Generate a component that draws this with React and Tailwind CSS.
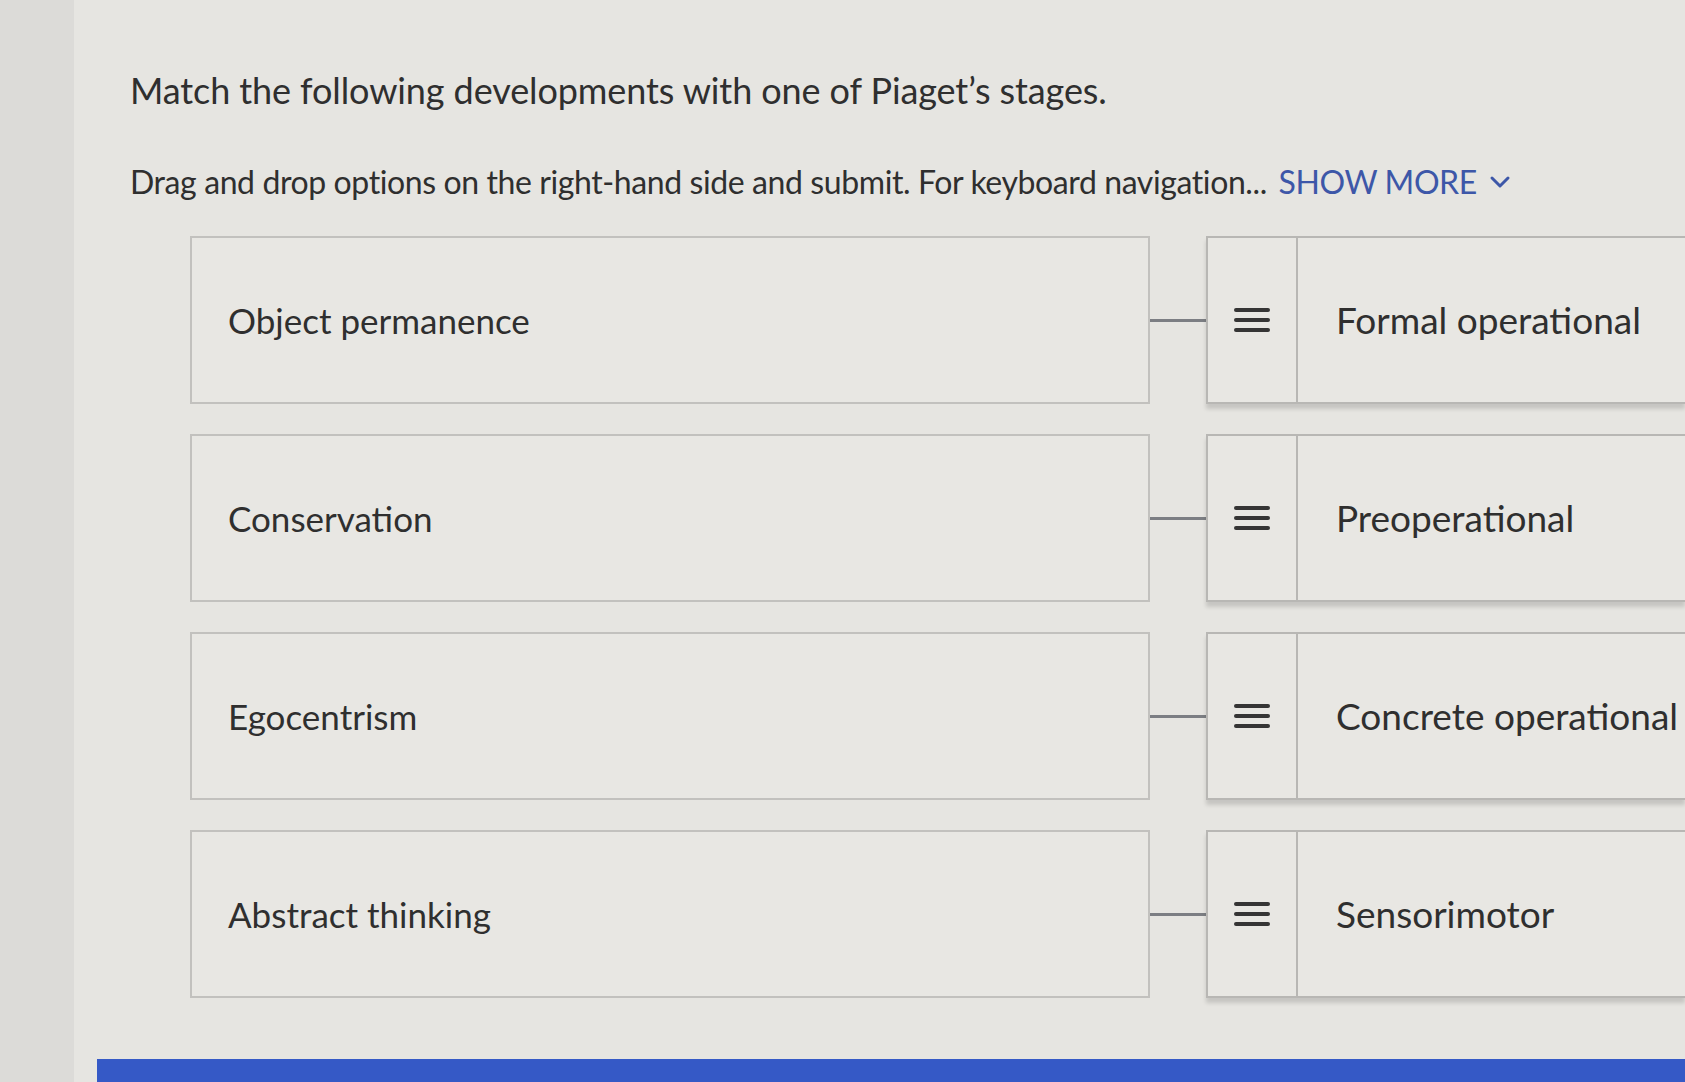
import React from 'react'

const rows = [
  { left: 'Object permanence', right: 'Formal operational' },
  { left: 'Conservation', right: 'Preoperational' },
  { left: 'Egocentrism', right: 'Concrete operational' },
  { left: 'Abstract thinking', right: 'Sensorimotor' },
]

function Handle() {
  return (
    <div className="flex w-[36px] flex-col gap-[6px]">
      <span className="block h-[4px] w-full rounded-sm bg-[#353535]" />
      <span className="block h-[4px] w-full rounded-sm bg-[#353535]" />
      <span className="block h-[4px] w-full rounded-sm bg-[#353535]" />
    </div>
  )
}

export default function App() {
  return (
    <div
      className="flex h-[1082px] w-[1685px] overflow-hidden bg-[#e6e5e1] text-[#2f2f2f]"
      style={{ fontFamily: 'Lato, "Open Sans", sans-serif' }}
    >
      <div className="w-[74px] shrink-0 bg-[#dcdbd8]" />

      <div className="flex flex-1 flex-col">
        <main className="flex-1 pl-[56px] pt-[66px]">
          <h1 className="text-[36px] leading-[48px] font-normal tracking-[-0.1px]">
            Match the following developments with one of Piaget’s stages.
          </h1>

          <p className="mt-[48px] text-[32px] leading-[40px] tracking-[-0.4px]">
            Drag and drop options on the right-hand side and submit. For keyboard navigation...{' '}
            <button className="ml-[4px] inline-flex items-center gap-[12px] text-[#3d57a8]">
              SHOW MORE
              <svg width="22" height="14" viewBox="0 0 22 14" fill="none" stroke="#3d57a8" strokeWidth="3" strokeLinecap="round" strokeLinejoin="round">
                <path d="M3 3l8 8 8-8" />
              </svg>
            </button>
          </p>

          <div className="mt-[34px] ml-[60px] flex flex-col gap-[30px]">
            {rows.map((r) => (
              <div key={r.left} className="flex h-[168px] items-center">
                <div className="flex h-full w-[960px] items-center border-2 border-[#c2c1be] bg-[#e8e7e3] pl-[36px] text-[35px]">
                  {r.left}
                </div>
                <div className="h-[3px] w-[56px] bg-[#7c7e83]" />
                <div className="flex h-full flex-1 border-2 border-r-0 border-[#b8b7b4] bg-[#e8e7e3] shadow-[0_5px_4px_rgba(0,0,0,0.14)]">
                  <div className="flex w-[90px] shrink-0 items-center justify-center border-r-2 border-[#b8b7b4]">
                    <Handle />
                  </div>
                  <div className="flex items-center pl-[38px] text-[37px] whitespace-nowrap">
                    {r.right}
                  </div>
                </div>
              </div>
            ))}
          </div>
        </main>

        <div className="ml-[23px] h-[23px] bg-[#3559c6]" />
      </div>
    </div>
  )
}
